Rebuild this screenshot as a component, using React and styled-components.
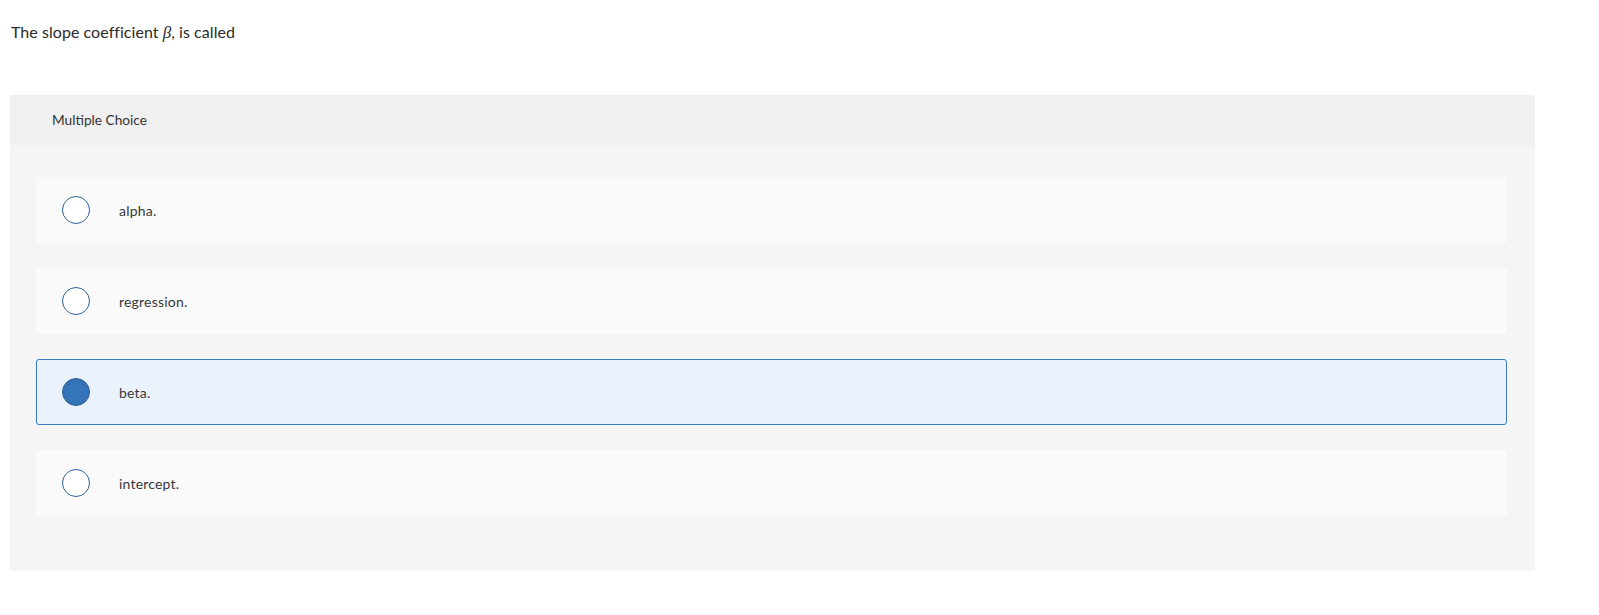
import React from 'react'
import styled, { createGlobalStyle } from 'styled-components'

const GlobalStyle = createGlobalStyle`
    body {
        margin: 0;
        background: #fff;
        font-family: Lato, "Open Sans", Arial, sans-serif;
        color: #333;
    }
`

const Page = styled.div`
    padding: 21px 64px 0 10px;
`

const Question = styled.p`
    margin: 0 0 0 1px;
    font-size: 16px;
    line-height: 22px;
    color: #2b2b2b;
    letter-spacing: 0.05px;
    i {
        font-family: "Liberation Serif", serif;
        font-size: 17px;
    }
`

const Panel = styled.section`
    margin-top: 51px;
    width: 1525px;
    background: #f5f5f5;
    border-radius: 3px;
    overflow: hidden;
`

const PanelHeader = styled.div`
    height: 50px;
    display: flex;
    align-items: center;
    padding: 0 0 2px 42px;
    box-sizing: border-box;
    background: #f0f0f0;
    font-size: 13.7px;
    color: #333;
`

const Options = styled.div`
    display: flex;
    flex-direction: column;
    gap: 25px;
    padding: 32px 28px 55px 26px;
`

const Option = styled.label`
    display: flex;
    align-items: center;
    height: 66px;
    box-sizing: border-box;
    padding-left: 25px;
    border-radius: 3px;
    background: ${({ selected }) => (selected ? '#eaf2fb' : '#fafafa')};
    border: 1px solid ${({ selected }) => (selected ? '#3a7bc6' : 'transparent')};
    cursor: pointer;
`

const Radio = styled.span`
    width: 28px;
    height: 28px;
    box-sizing: border-box;
    border-radius: 50%;
    border: 1.5px solid #2f6197;
    background: ${({ checked }) => (checked ? '#3574b8' : '#fff')};
    flex-shrink: 0;
`

const OptionText = styled.span`
    margin-left: 29px;
    font-size: 14px;
    letter-spacing: 0.2px;
    color: #383838;
`

const choices = ['alpha.', 'regression.', 'beta.', 'intercept.']

const App = () => {
    const picked = 2
    return (
        <>
            <GlobalStyle />
            <Page>
                <Question>
                    The slope coefficient <i>β</i>, is called
                </Question>
                <Panel>
                    <PanelHeader>Multiple Choice</PanelHeader>
                    <Options>
                        {choices.map((c, i) => (
                            <Option key={c} selected={i === picked}>
                                <Radio checked={i === picked} />
                                <OptionText>{c}</OptionText>
                            </Option>
                        ))}
                    </Options>
                </Panel>
            </Page>
        </>
    )
}

export default App
